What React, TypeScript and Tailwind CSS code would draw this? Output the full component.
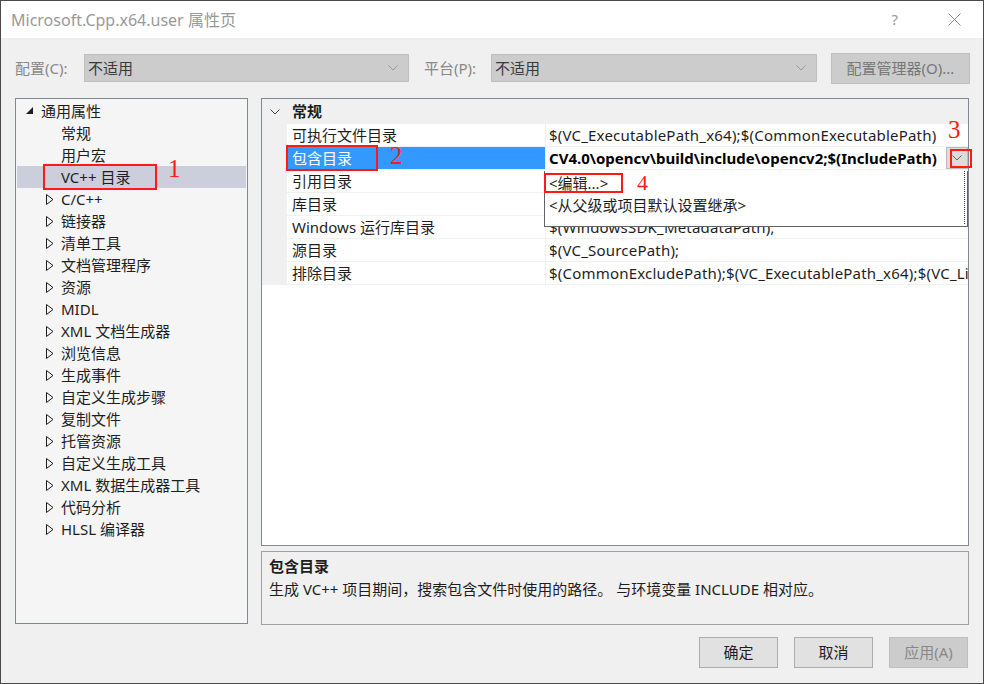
import React from "react";

const font = "font-['Noto_Sans','Noto_Sans_CJK_SC',sans-serif]";

const treeChildren = ["常规", "用户宏", "VC++ 目录"];
const treeGroups = [
  "C/C++",
  "链接器",
  "清单工具",
  "文档管理程序",
  "资源",
  "MIDL",
  "XML 文档生成器",
  "浏览信息",
  "生成事件",
  "自定义生成步骤",
  "复制文件",
  "托管资源",
  "自定义生成工具",
  "XML 数据生成器工具",
  "代码分析",
  "HLSL 编译器",
];

const props = [
  { name: "可执行文件目录", value: "$(VC_ExecutablePath_x64);$(CommonExecutablePath)" },
  { name: "包含目录", value: "CV4.0\\opencv\\build\\include\\opencv2;$(IncludePath)", selected: true },
  { name: "引用目录", value: "" },
  { name: "库目录", value: "" },
  { name: "Windows 运行库目录", value: "$(WindowsSDK_MetadataPath);" },
  { name: "源目录", value: "$(VC_SourcePath);" },
  { name: "排除目录", value: "$(CommonExcludePath);$(VC_ExecutablePath_x64);$(VC_LibraryPath_x64)" },
];

function Chevron({ className }: { className?: string }) {
  return (
    <svg width="10" height="6" viewBox="0 0 10 6" className={className}>
      <path d="M0.5 0.5 L5 5 L9.5 0.5" fill="none" stroke="currentColor" strokeWidth="1" />
    </svg>
  );
}

function Combo({ width }: { width: string }) {
  return (
    <div className={`${width} shrink-0 h-[28px] bg-[#cccccc] border border-[#bfbfbf] flex items-center pl-[3px] pr-[10px]`}>
      <span className="flex-1 text-[15px] text-[#3a3a3a]">不适用</span>
      <Chevron className="text-[#9a9a9a]" />
    </div>
  );
}

function RedNum({ n, className }: { n: string; className: string }) {
  return (
    <span className={`absolute font-['Liberation_Serif',serif] text-[#ff1a1a] leading-none ${className}`}>{n}</span>
  );
}

function TreePanel() {
  return (
    <div className="relative shrink-0 w-[233px] h-[526px] border border-[#828790] bg-[#f5f5f5] pt-[1px] text-[15px] text-[#1e1e1e]">
      <div className="h-[22px] flex items-center pl-[10px]">
        <svg width="8" height="8" viewBox="0 0 8 8" className="mr-[7px]">
          <path d="M7 0 L7 7 L0 7 Z" fill="#1e1e1e" />
        </svg>
        <span>通用属性</span>
      </div>
      {treeChildren.map((c, i) => (
        <div
          key={c}
          className={`h-[22px] flex items-center pl-[44px] mx-[1px] ${i === 2 ? "bg-[#cccedb]" : ""}`}
        >
          {c}
        </div>
      ))}
      {treeGroups.map((g) => (
        <div key={g} className="h-[22px] flex items-center pl-[30px] whitespace-nowrap">
          <svg width="8" height="11" viewBox="0 0 8 11" className="mr-[7px] shrink-0">
            <path d="M0.5 0.5 L7 5.5 L0.5 10.5 Z" fill="none" stroke="#1e1e1e" strokeWidth="1" />
          </svg>
          <span>{g}</span>
        </div>
      ))}
      <div className="absolute left-[27px] top-[65px] w-[114px] h-[26px] border-2 border-[#ff1a1a]" />
      <RedNum n="1" className="left-[152px] top-[57px] text-[25px]" />
    </div>
  );
}

function PropertyGrid() {
  return (
    <div className="relative h-[448px] border border-[#828790] bg-white text-[15px] text-[#1e1e1e]">
      <div className="h-[25px] flex items-center bg-[#f0f0f0]">
        <div className="w-[25px] flex justify-center">
          <Chevron className="text-[#444]" />
        </div>
        <span className="pl-[5px] font-bold">常规</span>
      </div>
      {props.map((p) => (
        <div key={p.name} className="h-[23px] flex">
          <div className="w-[25px] shrink-0 bg-[#f0f0f0]" />
          <div
            className={`w-[259px] shrink-0 flex items-center pl-[5px] border-b border-r border-[#f0f0f0] ${
              p.selected ? "bg-[#3399ff] text-white" : ""
            }`}
          >
            {p.name}
          </div>
          <div className="flex-1 min-w-0 flex items-center pl-[3px] border-b border-[#f0f0f0]">
            <span
              className={`flex-1 whitespace-nowrap overflow-hidden tracking-[0.2px] ${
                p.selected ? "font-bold text-black tracking-[0px]" : ""
              }`}
            >
              {p.value}
            </span>
            {p.selected && (
              <div className="w-[22px] h-[22px] shrink-0 bg-[#dcdcdc] border border-[#bbbbbb] flex items-center justify-center">
                <Chevron className="text-[#666]" />
              </div>
            )}
          </div>
        </div>
      ))}

      <div className="absolute left-[282px] top-[72px] w-[424px] h-[56px] bg-white border-l border-b border-r border-[#646464]">
        <div className="h-[22px] mt-[1px] flex items-center pl-[4px]">&lt;编辑...&gt;</div>
        <div className="h-[23px] flex items-center pl-[4px]">&lt;从父级或项目默认设置继承&gt;</div>
        <div className="absolute right-[2px] top-0 bottom-[2px] border-r border-dotted border-[#333]" />
      </div>

      <div className="absolute left-[24px] top-[46px] w-[92px] h-[26px] border-2 border-[#ff1a1a]" />
      <RedNum n="2" className="left-[128px] top-[44px] text-[25px]" />
      <div className="absolute left-[688px] top-[50px] w-[22px] h-[19px] border-2 border-[#ff1a1a]" />
      <RedNum n="3" className="left-[686px] top-[18px] text-[25px]" />
      <div className="absolute left-[282px] top-[74px] w-[79px] h-[20px] border-2 border-[#ff1a1a]" />
      <RedNum n="4" className="left-[375px] top-[73px] text-[22px]" />
    </div>
  );
}

export default function App() {
  return (
    <div className={`w-[984px] h-[684px] flex flex-col bg-[#f0f0f0] border border-[#4a4a4a] ${font}`}>
      <div className="h-[37px] bg-white flex items-center pl-[10px] pr-[22px]">
        <span className="flex-1 text-[16px] text-[#999]">Microsoft.Cpp.x64.user 属性页</span>
        <span className="text-[15px] text-[#999] mr-[50px]">?</span>
        <svg width="13" height="13" viewBox="0 0 13 13">
          <path d="M0.5 0.5 L12.5 12.5 M12.5 0.5 L0.5 12.5" stroke="#888" strokeWidth="1" />
        </svg>
      </div>

      <div className="h-[60px] flex items-center pl-[14px] pr-[14px] text-[15px] text-[#888]">
        <span className="w-[69px] shrink-0">配置(C):</span>
        <Combo width="w-[325px]" />
        <span className="ml-[15px] w-[67px] shrink-0">平台(P):</span>
        <Combo width="w-[326px]" />
        <div className="ml-[14px] w-[139px] shrink-0 h-[31px] bg-[#cccccc] border border-[#bfbfbf] flex items-center justify-center text-[#777]">
          配置管理器(O)...
        </div>
      </div>

      <div className="flex pl-[14px] pr-[14px] gap-[13px]">
        <TreePanel />
        <div className="flex-1 min-w-0 flex flex-col gap-[5px]">
          <PropertyGrid />
          <div className="h-[74px] border border-[#a0a0a0] bg-[#f0f0f0] px-[7px] pt-[3px] text-[15px] text-[#1e1e1e]">
            <div className="h-[22px] flex items-center font-bold">包含目录</div>
            <div className="h-[24px] flex items-center">
              生成 VC++ 项目期间，搜索包含文件时使用的路径。 与环境变量 INCLUDE 相对应。
            </div>
          </div>
        </div>
      </div>

      <div className="flex justify-end gap-[16px] pr-[15px] mt-[12px] text-[15px]">
        <div className="w-[79px] h-[31px] bg-[#e1e1e1] border border-[#adadad] flex items-center justify-center text-[#1e1e1e]">
          确定
        </div>
        <div className="w-[79px] h-[31px] bg-[#e1e1e1] border border-[#adadad] flex items-center justify-center text-[#1e1e1e]">
          取消
        </div>
        <div className="w-[79px] h-[31px] bg-[#cccccc] border border-[#bfbfbf] flex items-center justify-center text-[#888]">
          应用(A)
        </div>
      </div>
    </div>
  );
}
